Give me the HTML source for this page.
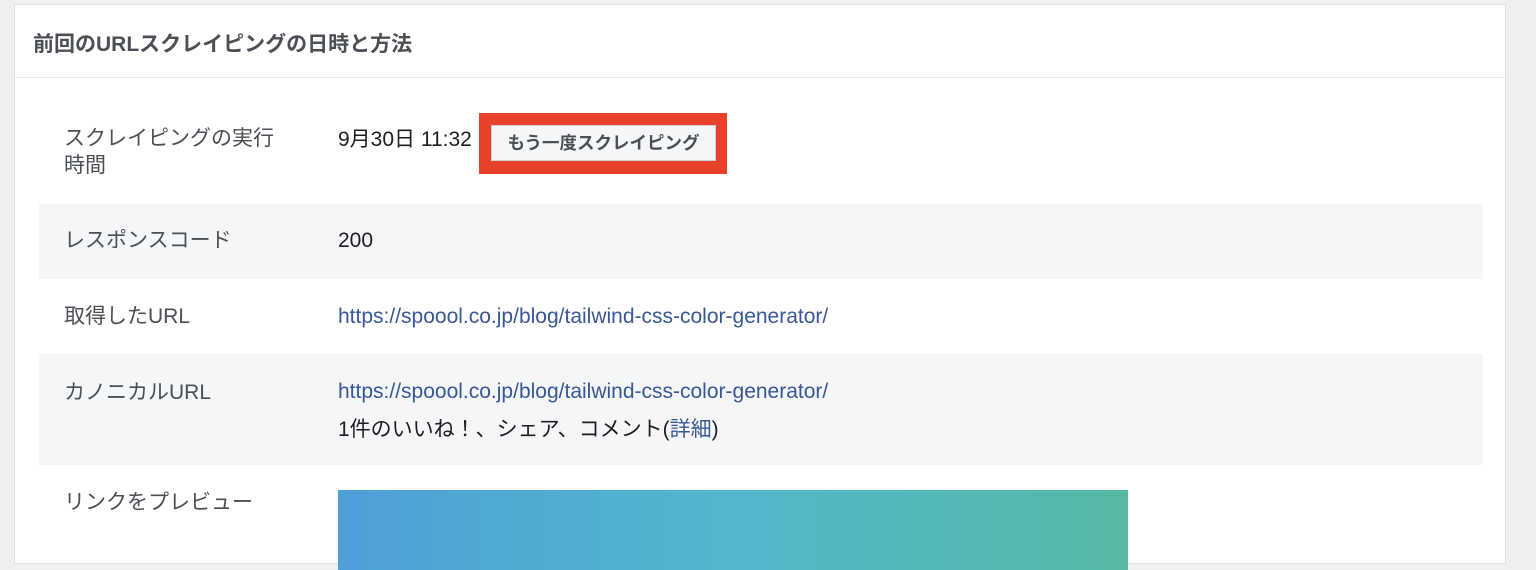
<!DOCTYPE html>
<html><head><meta charset="utf-8"><style>
body{margin:0;width:1536px;height:553px;overflow:hidden;background:#eeeff1;font-family:"Liberation Sans","Noto Sans CJK JP",sans-serif;color:#1c1e21;}
.card{position:absolute;left:14px;top:4px;width:1492px;height:560px;background:#fff;border:1px solid #dddfe2;box-sizing:border-box;}
.hd{position:absolute;left:0;top:0;width:100%;height:72px;border-bottom:1px solid #e5e6e9;}
.hd span{position:absolute;left:18px;top:23px;font-size:21px;font-weight:bold;color:#4b4f56;}
.row{position:absolute;left:24px;width:1444px;font-size:21px;color:#4b4f56;}
.g{background:#f5f6f7;}
.lab{position:absolute;left:25px;line-height:27px;}
.val{position:absolute;left:299px;line-height:27px;color:#1c1e21;}
a{color:#385898;text-decoration:none;}
.red{position:absolute;left:464px;top:108px;width:248px;height:61px;background:#e8412a;}
.btn{position:absolute;left:12px;top:12px;width:225px;height:36px;background:#f5f6f7;border:1px solid #ccd0d5;box-sizing:border-box;font-size:17.5px;font-weight:bold;color:#4b4f56;text-align:center;line-height:34px;white-space:nowrap;}
.img{position:absolute;left:323px;top:485px;width:790px;height:80px;background:linear-gradient(90deg,#4f9fd8,#52b7cc 50%,#57b8a4);}
</style></head><body>
<div class="card">
<div class="hd"><span>前回のURLスクレイピングの日時と方法</span></div>
<div class="row" style="top:72px;height:127px;"><div class="lab" style="top:48px;">スクレイピングの実行<br>時間</div><div class="val" style="top:49px;">9月30日 11:32</div></div>
<div class="red"><div class="btn">もう一度スクレイピング</div></div>
<div class="row g" style="top:199px;height:75px;"><div class="lab" style="top:23px;">レスポンスコード</div><div class="val" style="top:23px;">200</div></div>
<div class="row" style="top:274px;height:75px;"><div class="lab" style="top:24px;">取得したURL</div><div class="val" style="top:24px;"><a>https://spoool.co.jp/blog/tailwind-css-color-generator/</a></div></div>
<div class="row g" style="top:349px;height:111px;"><div class="lab" style="top:25px;">カノニカルURL</div><div class="val" style="top:25px;line-height:38px;margin-top:-6px;"><a>https://spoool.co.jp/blog/tailwind-css-color-generator/</a><br>1件のいいね！、シェア、コメント(<a>詳細</a>)</div></div>
<div class="row" style="top:460px;height:100px;"><div class="lab" style="top:24px;">リンクをプレビュー</div></div>
<div class="img"></div>
</div>
</body></html>
